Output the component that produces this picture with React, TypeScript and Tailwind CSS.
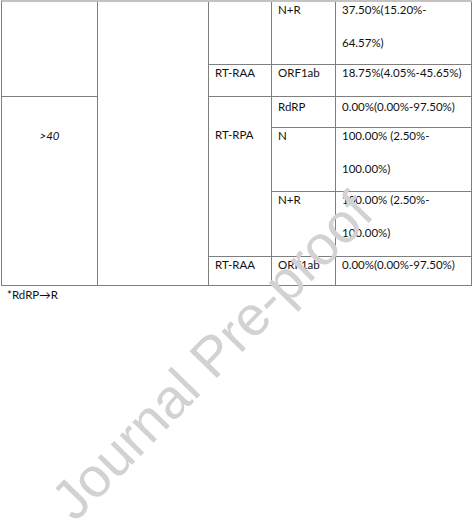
const line = "border-r border-b border-[#7f7f7f]";

function Cell({ className = "", children }: { className?: string; children?: React.ReactNode }) {
  return <div className={`${line} px-[6px] leading-[16px] ${className}`}>{children}</div>;
}

function Two({ a, b }: { a: string; b: string }) {
  return (
    <>
      <div className="h-[33px]">{a}</div>
      <div>{b}</div>
    </>
  );
}

export default function App() {
  return (
    <div className="relative h-[531px] w-[474px] overflow-hidden bg-white text-[11.5px] text-[#111] [font-family:Lato,'Open_Sans',sans-serif]">
      <div className="ml-[1px] grid w-[471px] grid-cols-[96px_111px_63px_64px_136px] grid-rows-[63px_32px_31px_64px_65px_29px] border-l border-t-2 border-l-[#7f7f7f] border-t-[#c2c2c2]">
        <Cell className="col-start-1 row-span-2 row-start-1" />
        <Cell className="col-start-1 row-span-4 row-start-3 pt-[31px] text-center italic">&gt;40</Cell>
        <Cell className="col-start-2 row-span-6 row-start-1" />

        <Cell className="col-start-3 row-start-1" />
        <Cell className="col-start-3 row-start-2">RT-RAA</Cell>
        <Cell className="col-start-3 row-span-3 row-start-3 pt-[30px]">RT-RPA</Cell>
        <Cell className="col-start-3 row-start-6">RT-RAA</Cell>

        <Cell className="col-start-4 row-start-1">N+R</Cell>
        <Cell className="col-start-4 row-start-2">ORF1ab</Cell>
        <Cell className="col-start-4 row-start-3 pt-[2px]">RdRP</Cell>
        <Cell className="col-start-4 row-start-4">N</Cell>
        <Cell className="col-start-4 row-start-5">N+R</Cell>
        <Cell className="col-start-4 row-start-6">ORF1ab</Cell>

        <Cell className="col-start-5 row-start-1">
          <Two a="37.50%(15.20%-" b="64.57%)" />
        </Cell>
        <Cell className="col-start-5 row-start-2">18.75%(4.05%-45.65%)</Cell>
        <Cell className="col-start-5 row-start-3 pt-[2px]">0.00%(0.00%-97.50%)</Cell>
        <Cell className="col-start-5 row-start-4">
          <Two a="100.00% (2.50%-" b="100.00%)" />
        </Cell>
        <Cell className="col-start-5 row-start-5">
          <Two a="100.00% (2.50%-" b="100.00%)" />
        </Cell>
        <Cell className="col-start-5 row-start-6">0.00%(0.00%-97.50%)</Cell>
      </div>

      <p className="pl-[7px] pt-[1px] leading-[16px]">*RdRP→R</p>

      {/* watermark sits over the table */}
      <div className="pointer-events-none absolute left-[82px] top-[530px]">
        <span className="absolute bottom-0 left-0 origin-bottom-left rotate-[-45.6deg] whitespace-nowrap text-[55.7px] leading-none text-[#d2d2d2] [font-family:'Liberation_Sans',Arial,sans-serif]">
          Journal Pre-proof
        </span>
      </div>
    </div>
  );
}
